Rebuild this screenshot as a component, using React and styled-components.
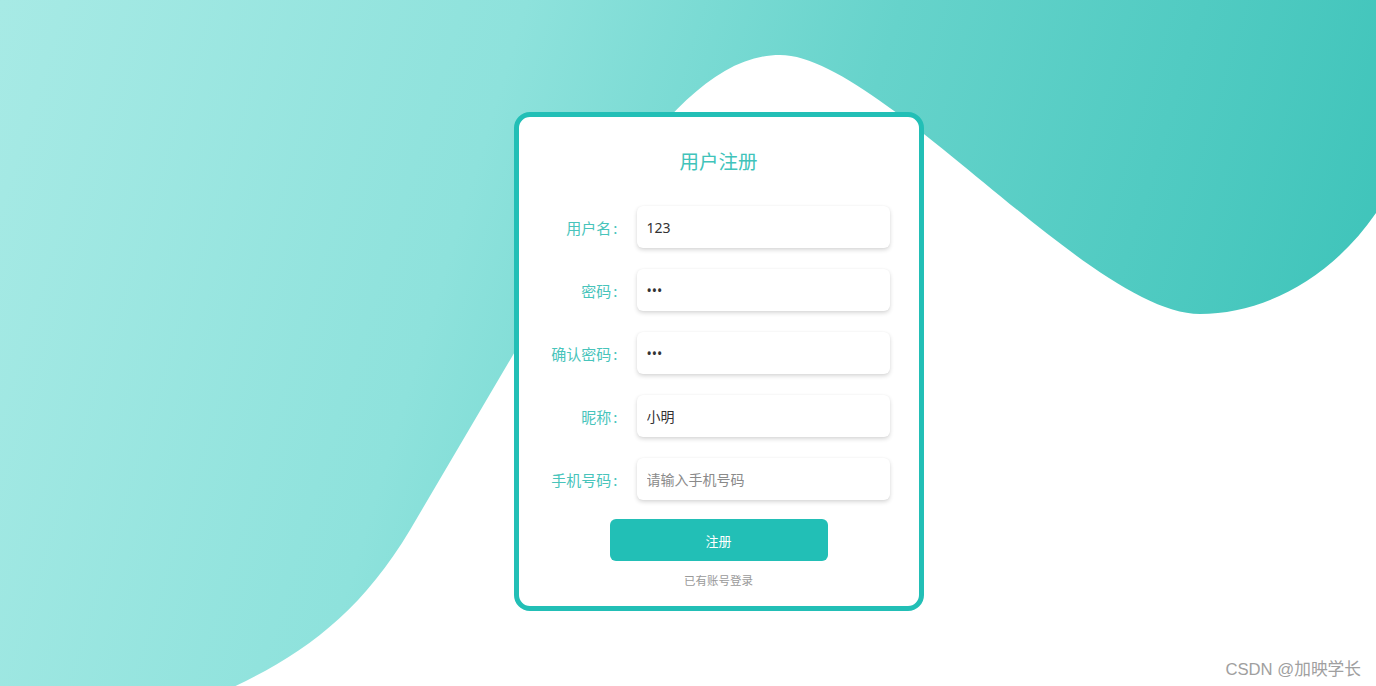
import React from "react";
import styled, { createGlobalStyle } from "styled-components";

const GlobalStyle = createGlobalStyle`
  html, body {
    margin: 0;
    padding: 0;
    background: #ffffff;
    font-family: "Noto Sans", "Noto Sans CJK SC", sans-serif;
  }
  * { box-sizing: border-box; }
`;

const Page = styled.div`
  position: relative;
  width: 100%;
  height: 686px;
  overflow: hidden;
  display: flex;
  justify-content: center;
  align-items: flex-start;
  padding-top: 112px;
`;

const Wave = styled.svg`
  position: absolute;
  left: 0;
  top: 0;
  width: 1376px;
  height: 686px;
  z-index: 0;
`;

const Card = styled.div`
  position: relative;
  z-index: 1;
  margin-left: 61px;
  width: 410px;
  height: 499px;
  background: #ffffff;
  border: 5px solid #22bfb6;
  border-radius: 16px;
  padding: 30px 0 0;
  display: flex;
  flex-direction: column;
  align-items: center;
`;

const Title = styled.h2`
  margin: 0 0 31px;
  font-family: "Noto Sans CJK SC", sans-serif;
  font-weight: 400;
  font-size: 19.5px;
  line-height: 28px;
  color: #40c3ba;
`;

const Form = styled.form`
  display: flex;
  flex-direction: column;
  align-items: center;
  gap: 21px;
  margin: 0;
`;

const Row = styled.label`
  display: flex;
  align-items: center;
  gap: 17px;
  height: 42px;
`;

const LabelText = styled.span`
  width: 72px;
  text-align: right;
  white-space: nowrap;
  font-family: "Noto Sans CJK SC", sans-serif;
  font-size: 15px;
  color: #48c4bb;
`;

const Colon = styled.span`
  margin-left: 2px;
  margin-right: 2px;
`;

const Input = styled.input`
  width: 253px;
  height: 42px;
  border: none;
  outline: none;
  border-radius: 6px;
  background: #ffffff;
  box-shadow: 0 2px 4px rgba(0, 0, 0, 0.16), 0 0 2px rgba(0, 0, 0, 0.04);
  padding: 0 10px;
  font-family: "Noto Sans", "Noto Sans CJK SC", sans-serif;
  font-size: 14px;
  color: #333333;

  &::placeholder {
    color: #8a8a8a;
    font-family: "Noto Sans CJK SC", sans-serif;
  }
`;

const SubmitButton = styled.button`
  margin-top: 19px;
  width: 218px;
  height: 42px;
  border: none;
  border-radius: 6px;
  background: #22bfb6;
  color: #ffffff;
  font-family: "Noto Sans CJK SC", sans-serif;
  font-size: 13px;
  cursor: pointer;
`;

const LoginLink = styled.a`
  margin-top: 11px;
  font-family: "Noto Sans CJK SC", sans-serif;
  font-size: 11.5px;
  line-height: 17px;
  color: #9a9a9a;
  text-decoration: none;
  cursor: pointer;
`;

const Watermark = styled.div`
  position: absolute;
  right: 15px;
  bottom: 6px;
  z-index: 1;
  font-family: "Liberation Sans", "Noto Sans CJK SC", sans-serif;
  font-size: 16.7px;
  color: #a0a0a0;
`;

const fields = [
  { label: "用户名", type: "text", value: "123" },
  { label: "密码", type: "password", value: "123" },
  { label: "确认密码", type: "password", value: "123" },
  { label: "昵称", type: "text", value: "小明" },
  { label: "手机号码", type: "text", value: "", placeholder: "请输入手机号码" },
];

export default function App() {
  return (
    <>
      <GlobalStyle />
      <Page>
        <Wave viewBox="0 0 1376 686" preserveAspectRatio="none">
          <defs>
            <linearGradient id="waveGrad" x1="0" y1="0" x2="1376" y2="420" gradientUnits="userSpaceOnUse">
              <stop offset="0" stopColor="#a7eae5" />
              <stop offset="0.35" stopColor="#8ee2dc" />
              <stop offset="0.6" stopColor="#66d3cb" />
              <stop offset="1" stopColor="#3cc3b9" />
            </linearGradient>
          </defs>
          <path
            d="M0 0 L1376 0 L1376 213 C1330 280 1262 314 1200 314 C1090 314 880 55 780 55 C720 55 668 112 610 190 L410 530 C350 630 280 670 180 710 L0 710 Z"
            fill="url(#waveGrad)"
          />
        </Wave>
        <Card>
          <Title>用户注册</Title>
          <Form onSubmit={(e) => e.preventDefault()}>
            {fields.map((f) => (
              <Row key={f.label}>
                <LabelText>
                  {f.label}
                  <Colon>:</Colon>
                </LabelText>
                <Input
                  type={f.type}
                  defaultValue={f.value}
                  placeholder={f.placeholder}
                />
              </Row>
            ))}
          </Form>
          <SubmitButton type="button">注册</SubmitButton>
          <LoginLink>已有账号登录</LoginLink>
        </Card>
        <Watermark>CSDN @加映学长</Watermark>
      </Page>
    </>
  );
}
